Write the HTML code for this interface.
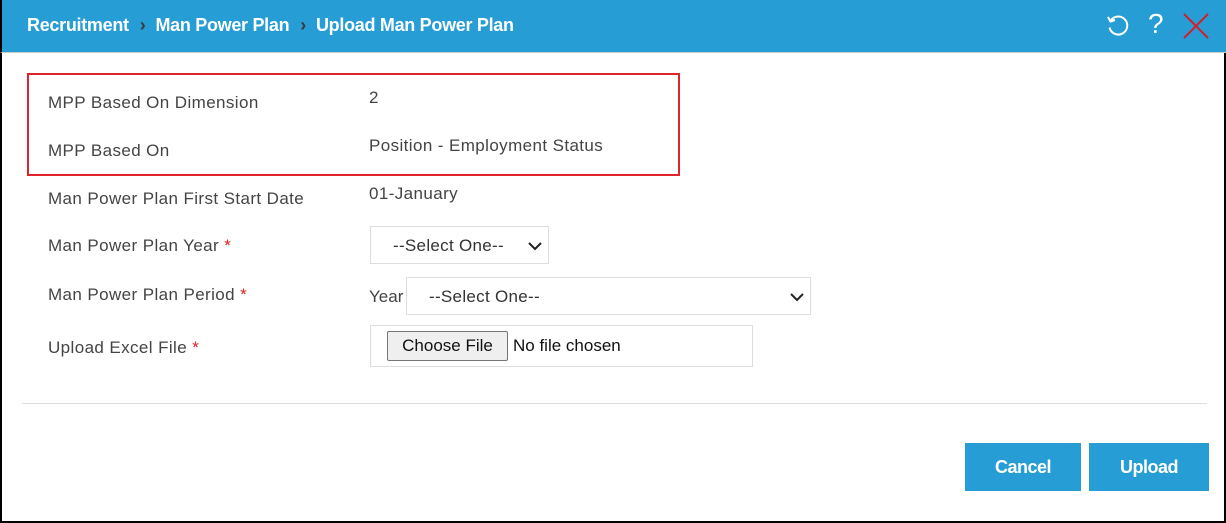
<!DOCTYPE html>
<html><head><style>
*{margin:0;padding:0;box-sizing:border-box}
body{width:1226px;height:523px;background:#fff;font-family:"Liberation Sans",sans-serif;position:relative;overflow:hidden}
.frame{position:absolute;left:0;top:0;width:1226px;height:523px;border:2px solid #000;border-top:none}
.hdr{position:absolute;left:0;top:0;width:1226px;height:53px;background:#279dd5;border-left:2px solid #000;border-bottom:1px solid #ccc}
.bc{position:absolute;left:25px;top:15px;color:#fff;font-weight:bold;font-size:18px;letter-spacing:-0.3px}
.bc span.s{color:#3a3a3a;font-size:18px;margin:0 10px 0 11px}
.t{position:absolute;font-size:17px;color:#444;letter-spacing:0.4px}
.req{color:#e02020}
.box{position:absolute;border:1px solid #ddd;background:#fff}
.sel{font-size:17px;color:#333;letter-spacing:0.3px}
.btn{position:absolute;top:443px;height:48px;background:#279dd5;color:#fff;font-weight:bold;font-size:18px;text-align:center;line-height:48px;letter-spacing:-0.5px}
</style></head><body>
<div class="frame"></div>
<div class="hdr">
<div class="bc">Recruitment<span class="s">›</span>Man Power Plan<span class="s">›</span>Upload Man Power Plan</div>
<svg style="position:absolute;left:1103px;top:12px" width="26" height="26" viewBox="0 0 26 26"><path d="M5.5 9 A9 9 0 1 1 4.5 15.5" fill="none" stroke="#fff" stroke-width="2"/><path d="M3 5 L5.5 9.5 L10 8" fill="none" stroke="#fff" stroke-width="2"/></svg>
<div style="position:absolute;left:1146px;top:8px;color:#fff;font-size:28px">?</div>
<svg style="position:absolute;left:1180px;top:12px" width="28" height="28"><path d="M2 2L26 26M26 2L2 26" stroke="#d0202a" stroke-width="2"/></svg>
</div>
<div style="position:absolute;left:27px;top:73px;width:653px;height:103px;border:2px solid #e0242c"></div>
<div class="t" style="left:48px;top:93px">MPP Based On Dimension</div>
<div class="t" style="left:369px;top:88px">2</div>
<div class="t" style="left:48px;top:141px">MPP Based On</div>
<div class="t" style="left:369px;top:136px">Position - Employment Status</div>
<div class="t" style="left:48px;top:189px">Man Power Plan First Start Date</div>
<div class="t" style="left:369px;top:184px">01-January</div>
<div class="t" style="left:48px;top:236px">Man Power Plan Year <span class="req">*</span></div>
<div class="box" style="left:370px;top:226px;width:179px;height:38px"><span class="sel" style="position:absolute;left:22px;top:9px">--Select One--</span>
<svg style="position:absolute;left:157px;top:14px" width="14" height="10"><path d="M1 2L7 8L13 2" fill="none" stroke="#222" stroke-width="2"/></svg></div>
<div class="t" style="left:48px;top:285px">Man Power Plan Period <span class="req">*</span></div>
<div class="t" style="left:369px;top:287px;letter-spacing:0">Year</div>
<div class="box" style="left:406px;top:277px;width:405px;height:38px"><span class="sel" style="position:absolute;left:22px;top:9px">--Select One--</span>
<svg style="position:absolute;left:383px;top:14px" width="14" height="10"><path d="M1 2L7 8L13 2" fill="none" stroke="#222" stroke-width="2"/></svg></div>
<div class="t" style="left:48px;top:338px">Upload Excel File <span class="req">*</span></div>
<div class="box" style="left:370px;top:325px;width:383px;height:42px">
<div style="position:absolute;left:16px;top:5px;width:121px;height:30px;background:#efefef;border:1px solid #767676;border-radius:2px;font-size:17px;color:#111;text-align:center;line-height:28px">Choose File</div>
<span style="position:absolute;left:142px;top:10px;font-size:17px;color:#111">No file chosen</span></div>
<div style="position:absolute;left:22px;top:403px;width:1185px;height:1px;background:#ddd"></div>
<div class="btn" style="left:965px;width:116px">Cancel</div>
<div class="btn" style="left:1089px;width:120px">Upload</div>
</body></html>
